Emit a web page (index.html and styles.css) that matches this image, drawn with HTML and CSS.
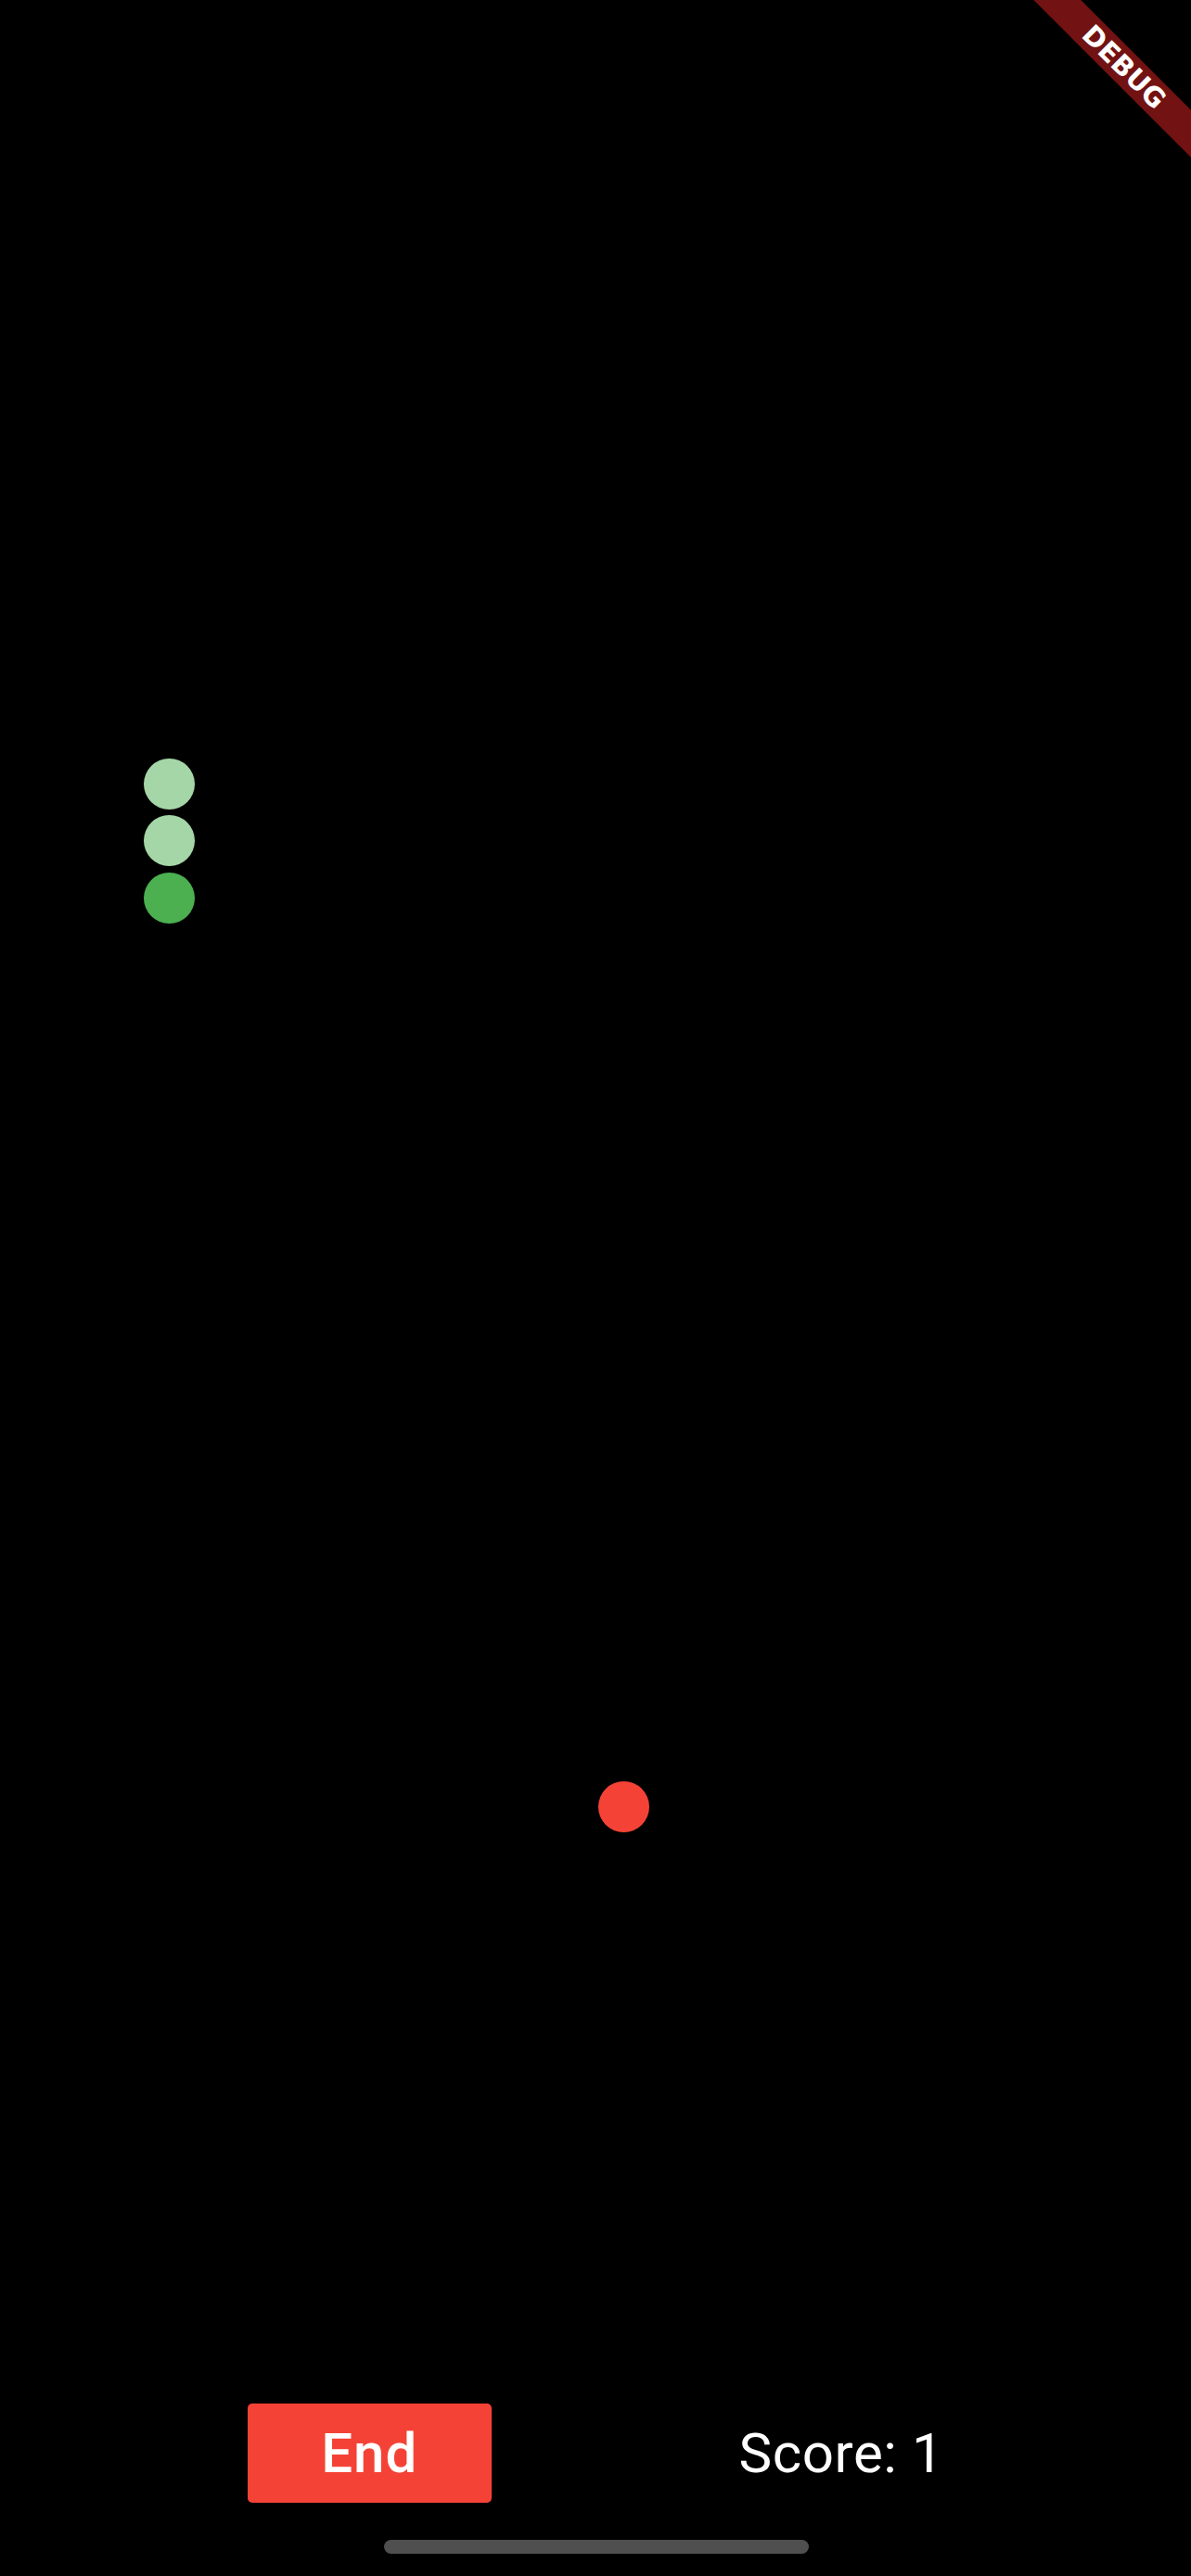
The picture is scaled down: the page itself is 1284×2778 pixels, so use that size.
FILE: index.html
```html
<!DOCTYPE html>
<html lang="en">
<head>
<meta charset="utf-8">
<title>Snake</title>
<link rel="stylesheet" href="styles.css">
</head>
<body>
<div class="app">
  <div class="board">
    <div class="cell snake-body" style="left:155px;top:818px"></div>
    <div class="cell snake-body" style="left:155px;top:879px"></div>
    <div class="cell snake-head" style="left:155px;top:941px"></div>
    <div class="cell food" style="left:645px;top:1921px"></div>
  </div>
  <div class="controls">
    <button class="end-btn">End</button>
    <div class="score">Score: 1</div>
  </div>
  <div class="home-indicator"></div>
  <div class="banner-anchor">
    <div class="banner">DEBUG</div>
  </div>
</div>
</body>
</html>
```
FILE: styles.css
```css
html, body {
  margin: 0;
  padding: 0;
  background: #000;
  width: 1284px;
  height: 2778px;
  overflow: hidden;
}
.app {
  position: relative;
  width: 1284px;
  height: 2778px;
  display: flex;
  flex-direction: column;
  font-family: Roboto, "Liberation Sans", Arial, sans-serif;
  overflow: hidden;
}
.board {
  position: relative;
  flex: 1;
}
.cell {
  position: absolute;
  width: 55px;
  height: 55px;
  border-radius: 50%;
}
.snake-body { background: #A5D6A7; }
.snake-head { background: #4CAF50; }
.food { background: #F44336; }
.controls {
  height: 107px;
  margin-bottom: 79px;
  display: flex;
  justify-content: space-evenly;
  align-items: center;
}
.end-btn {
  width: 263px;
  height: 107px;
  border: none;
  border-radius: 5px;
  background: #F44336;
  color: #fff;
  font-family: Roboto, "Liberation Sans", Arial, sans-serif;
  font-size: 60px;
  font-weight: 500;
  letter-spacing: 1px;
  padding: 0;
  line-height: 1;
}
.score {
  color: #fff;
  font-size: 60px;
  font-weight: 400;
  letter-spacing: 0.6px;
  line-height: 1;
}
.home-indicator {
  position: absolute;
  left: 414px;
  top: 2739px;
  width: 458px;
  height: 15px;
  border-radius: 8px;
  background: #4F4F4F;
}
.banner-anchor {
  position: absolute;
  left: 1284px;
  top: 0;
  width: 0;
  height: 0;
  transform: rotate(45deg);
  transform-origin: 0 0;
}
.banner {
  position: absolute;
  left: -120px;
  top: 84px;
  width: 240px;
  height: 36px;
  background: rgba(183, 28, 28, 0.627);
  color: #fff;
  font-family: "DejaVu Sans", "Liberation Sans", Arial, sans-serif;
  font-weight: 700;
  font-size: 29px;
  line-height: 36px;
  text-align: center;
}
```
